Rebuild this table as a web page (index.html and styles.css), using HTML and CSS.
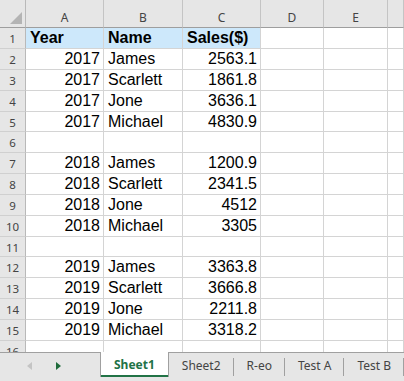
FILE: index.html
```html
<html lang="en">
<head>
  <meta charset="UTF-8" />
  <title>Sales by year</title>
  <link rel="stylesheet" href="styles.css">
</head>
<body>
  <div class="sheet">
    <div class="row head">
      <div class="corner"></div>
      <div>A</div><div>B</div><div>C</div><div>D</div><div>E</div><div></div>
    </div>
    <div class="row">
      <div class="rh">1</div>
      <div class="title">Year</div><div class="title">Name</div><div class="title">Sales($)</div><div></div><div></div><div></div>
    </div>
    <div class="row">
      <div class="rh">2</div>
      <div class="num">2017</div><div>James</div><div class="num">2563.1</div><div></div><div></div><div></div>
    </div>
    <div class="row">
      <div class="rh">3</div>
      <div class="num">2017</div><div>Scarlett</div><div class="num">1861.8</div><div></div><div></div><div></div>
    </div>
    <div class="row">
      <div class="rh">4</div>
      <div class="num">2017</div><div>Jone</div><div class="num">3636.1</div><div></div><div></div><div></div>
    </div>
    <div class="row short">
      <div class="rh">5</div>
      <div class="num">2017</div><div>Michael</div><div class="num">4830.9</div><div></div><div></div><div></div>
    </div>
    <div class="row">
      <div class="rh">6</div>
      <div></div><div></div><div></div><div></div><div></div><div></div>
    </div>
    <div class="row">
      <div class="rh">7</div>
      <div class="num">2018</div><div>James</div><div class="num">1200.9</div><div></div><div></div><div></div>
    </div>
    <div class="row">
      <div class="rh">8</div>
      <div class="num">2018</div><div>Scarlett</div><div class="num">2341.5</div><div></div><div></div><div></div>
    </div>
    <div class="row">
      <div class="rh">9</div>
      <div class="num">2018</div><div>Jone</div><div class="num">4512</div><div></div><div></div><div></div>
    </div>
    <div class="row">
      <div class="rh">10</div>
      <div class="num">2018</div><div>Michael</div><div class="num">3305</div><div></div><div></div><div></div>
    </div>
    <div class="row short">
      <div class="rh">11</div>
      <div></div><div></div><div></div><div></div><div></div><div></div>
    </div>
    <div class="row">
      <div class="rh">12</div>
      <div class="num">2019</div><div>James</div><div class="num">3363.8</div><div></div><div></div><div></div>
    </div>
    <div class="row">
      <div class="rh">13</div>
      <div class="num">2019</div><div>Scarlett</div><div class="num">3666.8</div><div></div><div></div><div></div>
    </div>
    <div class="row">
      <div class="rh">14</div>
      <div class="num">2019</div><div>Jone</div><div class="num">2211.8</div><div></div><div></div><div></div>
    </div>
    <div class="row">
      <div class="rh">15</div>
      <div class="num">2019</div><div>Michael</div><div class="num">3318.2</div><div></div><div></div><div></div>
    </div>
    <div class="row">
      <div class="rh">16</div>
      <div></div><div></div><div></div><div></div><div></div><div></div>
    </div>
  </div>

  <div class="tabbar">
    <div class="nav">
      <svg width="5" height="8" viewBox="0 0 5 8"><path d="M5 0 L0 4 L5 8 Z" fill="#c4c4c4"/></svg>
      <svg width="5" height="8" viewBox="0 0 5 8"><path d="M0 0 L5 4 L0 8 Z" fill="#1f6b3b"/></svg>
    </div>
    <div class="tab active">Sheet1</div>
    <div class="tab">Sheet2</div>
    <div class="tab">R-eo</div>
    <div class="tab">Test A</div>
    <div class="tab">Test B</div>
  </div>
</body>
</html>
```

FILE: styles.css
```css
body {
  margin: 0;
  width: 404px;
  height: 381px;
  overflow: hidden;
  background: #fff;
  font-family: "Liberation Sans", Arial, sans-serif;
  color: #000;
}

.sheet {
  height: 352px;
  overflow: hidden;
}

.row {
  display: grid;
  grid-template-columns: 26px 78px 79px 78px 63px 64px 1fr;
  height: 21px;
}

.row.short {
  height: 20px;
}

.row > div {
  border-right: 1px solid #d4d4d4;
  border-bottom: 1px solid #d4d4d4;
  padding: 0 3px 0 4px;
  font-size: 16px;
  line-height: 20px;
  white-space: nowrap;
  overflow: hidden;
}

.row > .num {
  text-align: right;
}

.row > .title {
  background-color: #cde8fb;
  font-weight: bold;
}

.row > .rh {
  background-color: #e6e6e6;
  border-right-color: #b9b9b9;
  border-bottom-color: #d0d0d0;
  padding: 1px 0 0;
  text-align: center;
  font-family: "Noto Sans", sans-serif;
  font-size: 11.5px;
  color: #444;
}

.head {
  height: 28px;
}

.head > div {
  background-color: #e6e6e6;
  border-bottom-color: #9e9e9e;
  border-right-color: #c4c4c4;
  padding: 8px 0 0;
  text-align: center;
  font-family: "Noto Sans", sans-serif;
  font-size: 12px !important;
  color: #444;
}

.head > .corner {
  position: relative;
  border-right-color: #b9b9b9;
}

.corner::after {
  content: "";
  position: absolute;
  right: 3px;
  bottom: 3px;
  width: 12px;
  height: 12px;
  background: #b4b4b4;
  clip-path: polygon(100% 0, 100% 100%, 0 100%);
}

.tabbar {
  display: flex;
  height: 28px;
  border-top: 1px solid #a0a0a0;
  background-color: #e6e6e6;
  font-family: "Noto Sans", sans-serif;
  font-size: 12px;
  color: #444;
}

.nav {
  display: flex;
  align-items: center;
  gap: 24px;
  width: 100px;
  height: 25px;
  padding-left: 27px;
  box-sizing: border-box;
}

.tab {
  position: relative;
  display: flex;
  align-items: center;
  height: 25px;
  padding: 0 13px;
}

.tab::after {
  content: "";
  position: absolute;
  right: 0;
  top: 5px;
  bottom: 2px;
  width: 1px;
  background: #a0a0a0;
}

.tab.active {
  margin-top: -1px;
  height: 25px;
  padding: 0 13px;
  background: #fff;
  border-left: 1px solid #a0a0a0;
  border-right: 1px solid #a0a0a0;
  box-shadow: inset 0 -2px 0 #217346;
  color: #217346;
  font-weight: bold;
}

.tab.active::after {
  display: none;
}
```
